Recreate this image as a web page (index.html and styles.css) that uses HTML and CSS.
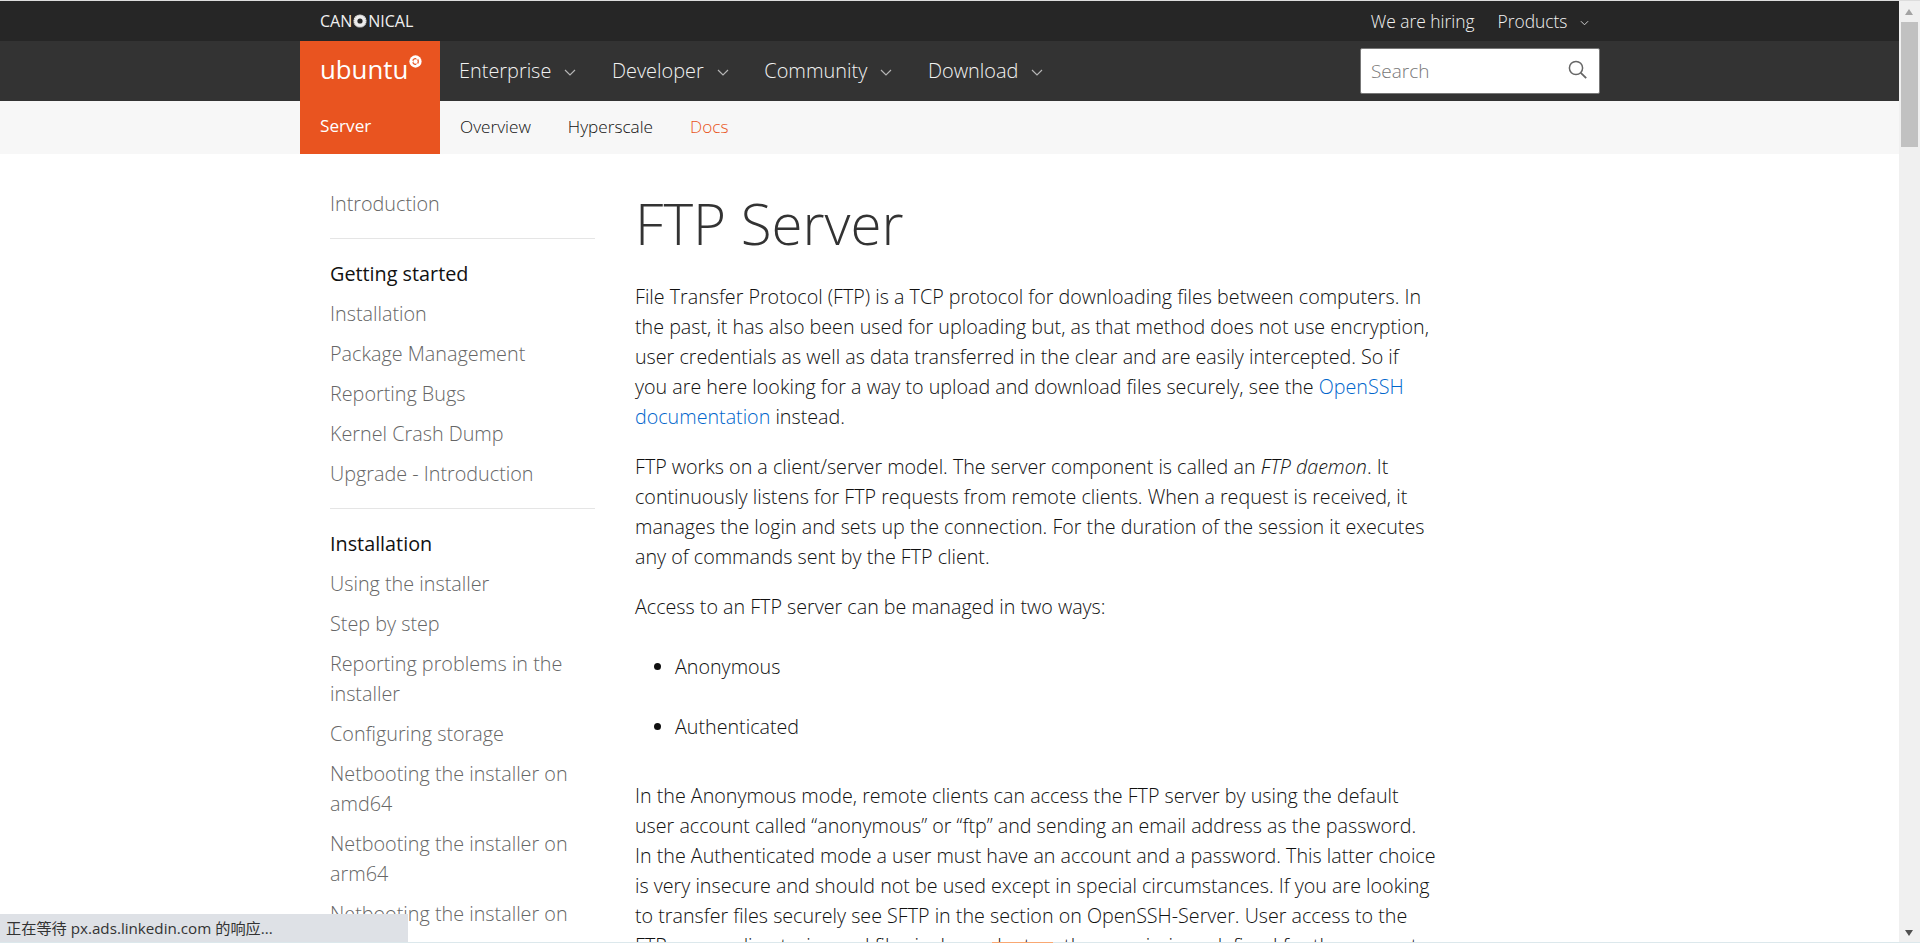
FILE: index.html
```html
<!DOCTYPE html>
<html lang="en">
<head>
<meta charset="utf-8">
<title>FTP Server | Ubuntu</title>
<link rel="stylesheet" href="styles.css">
</head>
<body>
<div class="viewport">
  <div class="page">
    <div class="global-nav">
      <div class="row global-row">
        <span class="canonical">CAN<svg class="can-o" viewBox="0 0 14 14" aria-hidden="true"><circle cx="7" cy="7" r="6.6" fill="#ededed"/><circle cx="7" cy="7" r="6.2" fill="none" stroke="#262626" stroke-width=".5" stroke-dasharray="1 1"/><circle cx="7" cy="7" r="2.6" fill="#262626"/></svg>NICAL</span>
        <div class="global-links">
          <span>We are hiring</span>
          <span class="products">Products <svg class="chev-s" viewBox="0 0 10 6"><path d="M1 1l4 4 4-4" fill="none" stroke="#d0d0d0" stroke-width="1.1"/></svg></span>
        </div>
      </div>
    </div>
    <header class="main-nav">
      <div class="row main-row">
        <div class="brand">
          <span class="logo">ubuntu<svg class="logo-mark" viewBox="0 0 14 14" aria-hidden="true"><circle cx="7" cy="7" r="6.6" fill="#fff"/><circle cx="7" cy="7" r="3" fill="none" stroke="#e95420" stroke-width="1.3"/><circle cx="3.6" cy="7" r="1" fill="#fff"/><circle cx="8.8" cy="4" r="1" fill="#fff"/><circle cx="8.8" cy="10" r="1" fill="#fff"/></svg></span>
        </div>
        <nav class="menu">
          <span class="menu-item">Enterprise <svg class="chev" viewBox="0 0 12 7"><path d="M1 1l5 5 5-5" fill="none" stroke="#b5b5b5" stroke-width="1.2"/></svg></span>
          <span class="menu-item">Developer <svg class="chev" viewBox="0 0 12 7"><path d="M1 1l5 5 5-5" fill="none" stroke="#b5b5b5" stroke-width="1.2"/></svg></span>
          <span class="menu-item">Community <svg class="chev" viewBox="0 0 12 7"><path d="M1 1l5 5 5-5" fill="none" stroke="#b5b5b5" stroke-width="1.2"/></svg></span>
          <span class="menu-item">Download <svg class="chev" viewBox="0 0 12 7"><path d="M1 1l5 5 5-5" fill="none" stroke="#b5b5b5" stroke-width="1.2"/></svg></span>
        </nav>
        <div class="search">
          <span class="search-text">Search</span>
          <svg class="search-icon" viewBox="0 0 19 19"><circle cx="8" cy="8" r="6.6" fill="none" stroke="#666" stroke-width="1.5"/><path d="M12.8 12.8l5.4 5.4" stroke="#666" stroke-width="1.8"/></svg>
        </div>
      </div>
    </header>
    <div class="sub-nav">
      <div class="row sub-row">
        <div class="section-tag">Server</div>
        <span class="sub-link">Overview</span>
        <span class="sub-link">Hyperscale</span>
        <span class="sub-link active">Docs</span>
      </div>
    </div>
    <main class="content">
      <aside class="side">
        <div class="side-group">
          <a class="side-link">Introduction</a>
        </div>
        <div class="side-group">
          <h4 class="side-head">Getting started</h4>
          <a class="side-link">Installation</a>
          <a class="side-link">Package Management</a>
          <a class="side-link">Reporting Bugs</a>
          <a class="side-link">Kernel Crash Dump</a>
          <a class="side-link">Upgrade - Introduction</a>
        </div>
        <div class="side-group">
          <h4 class="side-head">Installation</h4>
          <a class="side-link">Using the installer</a>
          <a class="side-link">Step by step</a>
          <a class="side-link">Reporting problems in the installer</a>
          <a class="side-link">Configuring storage</a>
          <a class="side-link">Netbooting the installer on amd64</a>
          <a class="side-link">Netbooting the installer on arm64</a>
          <a class="side-link">Netbooting the installer on ppc64el</a>
        </div>
      </aside>
      <article class="article">
        <h1 class="title">FTP Server</h1>
        <p>File Transfer Protocol (FTP) is a TCP protocol for downloading files between computers. In<br>the past, it has also been used for uploading but, as that method does not use encryption,<br>user credentials as well as data transferred in the clear and are easily intercepted. So if<br>you are here looking for a way to upload and download files securely, see the <a class="link">OpenSSH<br>documentation</a> instead.</p>
        <p>FTP works on a client/server model. The server component is called an <em>FTP daemon</em>. It<br>continuously listens for FTP requests from remote clients. When a request is received, it<br>manages the login and sets up the connection. For the duration of the session it executes<br>any of commands sent by the FTP client.</p>
        <p>Access to an FTP server can be managed in two ways:</p>
        <ul>
          <li>Anonymous</li>
          <li>Authenticated</li>
        </ul>
        <p>In the Anonymous mode, remote clients can access the FTP server by using the default<br>user account called “anonymous” or “ftp” and sending an email address as the password.<br>In the Authenticated mode a user must have an account and a password. This latter choice<br>is very insecure and should not be used except in special circumstances. If you are looking<br>to transfer files securely see SFTP in the section on OpenSSH-Server. User access to the<br>FTP secure directories and files is dependent on the permissions defined for the account</p>
      </article>
    </main>
  </div>
  <div class="scrollbar">
    <div class="sb-up"></div>
    <div class="sb-thumb"></div>
    <div class="sb-down"></div>
  </div>
  <div class="status">正在等待 px.ads.linkedin.com 的响应...</div>
  <div class="progress"></div>
</div>
</body>
</html>
```
FILE: styles.css
```css
* { box-sizing: border-box; }
html, body { margin: 0; height: 100%; overflow: hidden; background: #fff; }
body { font-family: "Open Sans", "Noto Sans CJK SC", sans-serif; color: #111; }
.viewport { position: relative; height: 943px; display: flex; border-top: 1px solid #ddd; border-bottom: 1px solid #dce8ec; }
.page { flex: 1; min-width: 0; overflow: hidden; }
.row { width: 1300px; margin-left: 300px; display: flex; }
.global-nav { background: #262626; height: 40px; }
.global-row { height: 40px; align-items: center; justify-content: space-between; padding: 0 11px 0 20px; color: #f2f2f2; font-size: 17.4px; font-weight: 300; }
.canonical { font-size: 16px; font-weight: 400; display: inline-flex; align-items: center; color: #f0f0f0; }
.can-o { width: 14px; height: 14px; margin: 0 1px; }
.global-links { display: flex; gap: 23px; }
.global-links span { white-space: nowrap; }
.chev-s { width: 9px; height: 6px; margin-left: 8px; vertical-align: 2px; }
.main-nav { background: #333; height: 60px; }
.main-row { height: 60px; }
.brand { width: 140px; background: #e95420; padding: 13px 0 0 20px; }
.logo { color: #fff; font-size: 25.8px; line-height: 30px; font-weight: 400; display: inline-flex; align-items: flex-start; }
.logo-mark { width: 13px; height: 13px; margin: 1px 0 0 1px; }
.menu { display: flex; align-items: center; padding: 0 0 2px 19px; gap: 35.5px; color: #f2f2f2; font-size: 19.9px; font-weight: 300; }
.menu-item { white-space: nowrap; }
.chev { width: 12px; height: 7px; margin-left: 8px; vertical-align: 2px; }
.search { margin-left: auto; width: 240px; height: 46px; margin-top: 7px; background: #fff; border: 1px solid #777; border-radius: 2px; display: flex; align-items: center; justify-content: space-between; padding: 0 12px 0 10px; }
.search-text { color: #777; font-size: 19px; font-weight: 300; }
.search-icon { width: 19px; height: 19px; margin-top: -3px; }
.sub-nav { background: #f7f7f7; height: 53px; }
.sub-row { height: 53px; align-items: center; font-size: 17.2px; font-weight: 300; padding-bottom: 3px; }
.section-tag { width: 140px; height: 53px; margin-bottom: -3px; background: #e95420; color: #fff; padding: 13px 0 0 20px; margin-right: 20px; font-weight: 500; }
.sub-link { margin-right: 37px; color: #111; }
.active { color: #e95420; }
.content { width: 1300px; margin-left: 300px; display: flex; padding: 0 30px; }
.side { width: 265px; padding-top: 35px; flex: none; }
.side-group { padding-bottom: 19px; margin-bottom: 20px; border-bottom: 1px solid #e5e5e5; }
.side-group:last-child { border-bottom: 0; }
.side-link { display: block; color: #666; font-size: 19.8px; line-height: 30px; margin-bottom: 10px; font-weight: 300; }
.side-group .side-link:last-child { margin-bottom: 0; }
.side-head { margin: 0 0 10px; font-size: 19.8px; line-height: 30px; font-weight: 500; color: #111; }
.article { width: 800px; margin-left: 40px; font-size: 19.7px; line-height: 30px; font-weight: 300; color: #111; }
.title { font-size: 56.5px; line-height: 72px; font-weight: 300; margin: 34px 0 22px; color: #333; }
.article p { margin: 0 0 20px; white-space: nowrap; }
.link { color: #06c; }
.article ul { margin: 30px 0 39px; padding-left: 40px; }
.article li { margin-bottom: 30px; }
.article li:last-child { margin-bottom: 0; }
.scrollbar { flex: none; width: 21px; background: #f0f0f0; position: relative; }
.sb-up { height: 21px; position: relative; }
.sb-up::after { content: ""; position: absolute; left: 6px; top: 8px; border: 4.5px solid transparent; border-top: 0; border-bottom: 6px solid #a3a3a3; }
.sb-thumb { height: 125px; margin: 0 2px; background: #c1c1c1; }
.sb-down { position: absolute; left: 6px; bottom: 6px; border: 4.5px solid transparent; border-bottom: 0; border-top: 6px solid #505050; }
.status { position: absolute; left: 0; bottom: 0; width: 408px; height: 28px; background: #dee1e6; color: #333; font-size: 15.2px; line-height: 28px; padding-left: 6px; font-family: "Open Sans", "Noto Sans CJK SC", sans-serif; }
.progress { position: absolute; left: 992px; bottom: -1px; width: 61px; height: 1px; background: #f9a873; }
```
